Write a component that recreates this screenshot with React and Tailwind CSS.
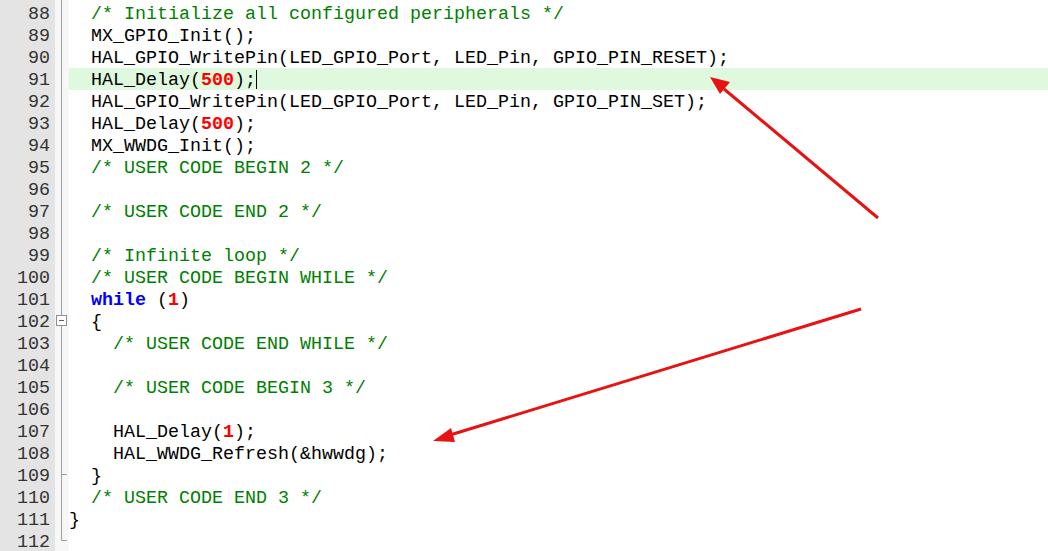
import React from 'react'

// token kinds: t = plain, c = comment, k = keyword, n = number
const lines = [
  { no: 88, parts: [['c', '  /* Initialize all configured peripherals */']] },
  { no: 89, parts: [['t', '  MX_GPIO_Init();']] },
  { no: 90, parts: [['t', '  HAL_GPIO_WritePin(LED_GPIO_Port, LED_Pin, GPIO_PIN_RESET);']] },
  { no: 91, active: true, parts: [['t', '  HAL_Delay('], ['n', '500'], ['t', ');']] },
  { no: 92, parts: [['t', '  HAL_GPIO_WritePin(LED_GPIO_Port, LED_Pin, GPIO_PIN_SET);']] },
  { no: 93, parts: [['t', '  HAL_Delay('], ['n', '500'], ['t', ');']] },
  { no: 94, parts: [['t', '  MX_WWDG_Init();']] },
  { no: 95, parts: [['c', '  /* USER CODE BEGIN 2 */']] },
  { no: 96, parts: [] },
  { no: 97, parts: [['c', '  /* USER CODE END 2 */']] },
  { no: 98, parts: [] },
  { no: 99, parts: [['c', '  /* Infinite loop */']] },
  { no: 100, parts: [['c', '  /* USER CODE BEGIN WHILE */']] },
  { no: 101, parts: [['t', '  '], ['k', 'while'], ['t', ' ('], ['n', '1'], ['t', ')']] },
  { no: 102, fold: 'box', parts: [['t', '  {']] },
  { no: 103, parts: [['c', '    /* USER CODE END WHILE */']] },
  { no: 104, parts: [] },
  { no: 105, parts: [['c', '    /* USER CODE BEGIN 3 */']] },
  { no: 106, parts: [] },
  { no: 107, parts: [['t', '    HAL_Delay('], ['n', '1'], ['t', ');']] },
  { no: 108, parts: [['t', '    HAL_WWDG_Refresh(&hwwdg);']] },
  { no: 109, fold: 'tick', parts: [['t', '  }']] },
  { no: 110, parts: [['c', '  /* USER CODE END 3 */']] },
  { no: 111, parts: [['t', '}']] },
  { no: 112, fold: 'end', parts: [] },
]

const tokenClass = {
  t: 'text-black',
  c: 'text-[#008000]',
  k: 'text-[#0000ff] font-bold',
  n: 'text-[#ff0000] font-bold',
}

// fold margin glyph for one line, 14x22
const FoldMark = ({ kind }) => (
  <svg width='14' height='22' className='block shrink-0'>
    {kind === 'end' ? (
      <path d='M6.5 0V10.5H12' stroke='#a0a0a0' fill='none' />
    ) : (
      <path d='M6.5 0V22' stroke='#a0a0a0' fill='none' />
    )}
    {kind === 'tick' && <path d='M6.5 10.5H12' stroke='#a0a0a0' fill='none' />}
    {kind === 'box' && (
      <>
        <rect x='1.5' y='5.5' width='10' height='10' fill='#fff' stroke='#909090' />
        <path d='M4 10.5H9' stroke='#606060' />
      </>
    )}
  </svg>
)

const App = () => {
  return (
    <div className='relative w-[1048px] h-[551px] overflow-hidden bg-white font-["Liberation_Mono","Courier_New",monospace] text-[18.33px] leading-[26px] flex'>
      <div className='w-[55px] h-full bg-[#e4e4e4] pt-[2px] pr-[5px] text-right text-[#333] shrink-0'>
        {lines.map(line => (
          <div key={line.no} className='h-[22px]'>{line.no}</div>
        ))}
      </div>

      <div className='w-[14px] h-full bg-[#f7f7f7] shrink-0 flex flex-col'>
        <svg width='14' height='2' className='block shrink-0'>
          <path d='M6.5 0V2' stroke='#a0a0a0' />
        </svg>
        {lines.map(line => (
          <FoldMark key={line.no} kind={line.fold} />
        ))}
      </div>

      <div className='flex-1 h-full pt-[2px] flex flex-col'>
        {lines.map(line => (
          <div key={line.no} className={`h-[22px] shrink-0 whitespace-pre ${line.active ? 'bg-[#dff9df]' : ''}`}>
            {line.parts.map((p, i) => (
              <span key={i} className={tokenClass[p[0]]}>{p[1]}</span>
            ))}
            {line.active && <span className='inline-block align-top mt-[2px] w-px h-[19px] bg-black' />}
          </div>
        ))}
      </div>

      <svg className='absolute left-0 top-0 pointer-events-none' width='1048' height='551'>
        <line x1='878' y1='218' x2='724' y2='89' stroke='#e81212' strokeWidth='3' />
        <polygon points='710,77 730,82 720,94' fill='#e81212' />
        <line x1='861' y1='309' x2='450' y2='435' stroke='#e81212' strokeWidth='3' />
        <polygon points='433,441 451,428 455,442' fill='#e81212' />
      </svg>
    </div>
  )
}

export default App
